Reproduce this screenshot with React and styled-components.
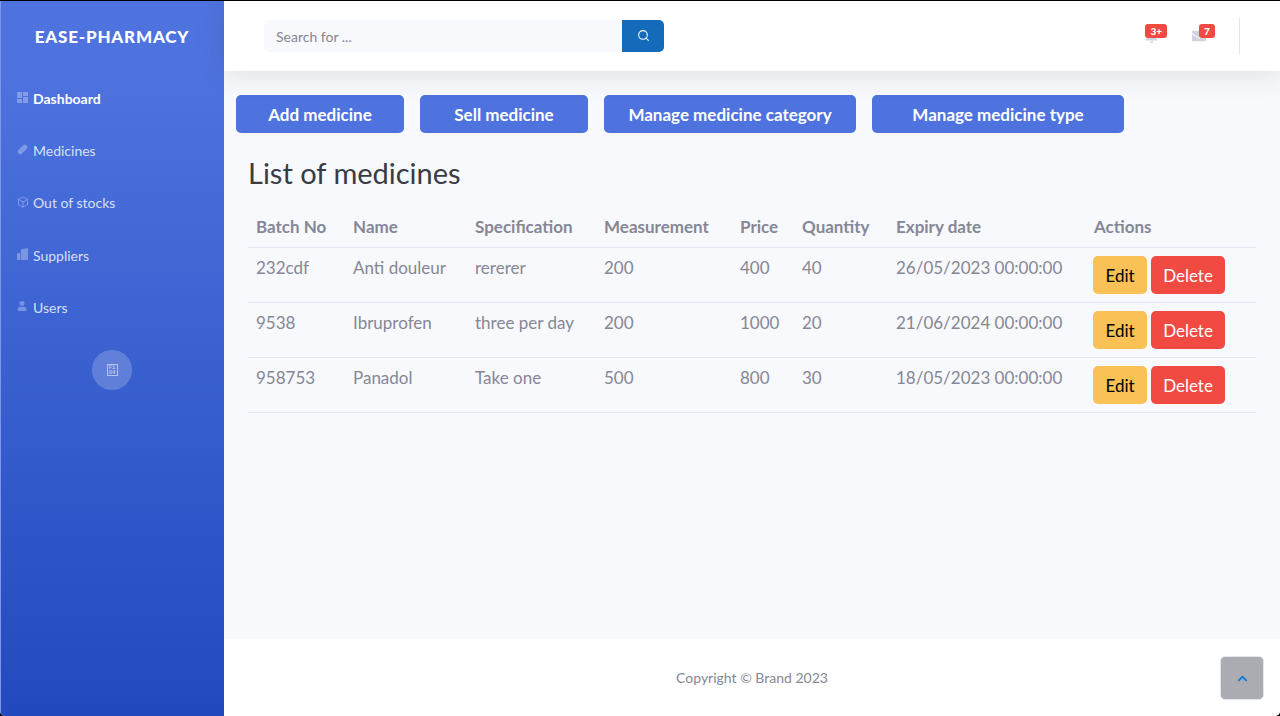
import styled, { createGlobalStyle } from 'styled-components';
import { FaUser, FaBell, FaEnvelope, FaChevronUp } from 'react-icons/fa';
import { FiBox, FiSearch } from 'react-icons/fi';

const GlobalStyle = createGlobalStyle`
  * { box-sizing: border-box; }
  html, body { margin: 0; height: 100%; background: #000; }
  body {
    font-family: Lato, "Noto Sans", sans-serif;
    color: #858796;
  }
`;

const medicines = [
  { batch: '232cdf', name: 'Anti douleur', spec: 'rererer', measure: '200', price: '400', qty: '40', expiry: '26/05/2023 00:00:00' },
  { batch: '9538', name: 'Ibruprofen', spec: 'three per day', measure: '200', price: '1000', qty: '20', expiry: '21/06/2024 00:00:00' },
  { batch: '958753', name: 'Panadol', spec: 'Take one', measure: '500', price: '800', qty: '30', expiry: '18/05/2023 00:00:00' },
];

function DashIcon() {
  return (
    <svg width="11" height="11" viewBox="0 0 11 11" fill="currentColor">
      <rect x="0" y="0" width="5" height="6" />
      <rect x="6" y="0" width="5" height="4" />
      <rect x="0" y="7" width="5" height="4" />
      <rect x="6" y="5" width="5" height="6" />
    </svg>
  );
}

function CapsuleIcon() {
  return (
    <svg width="11" height="11" viewBox="0 0 11 11" fill="currentColor">
      <rect x="-0.2" y="3" width="11.4" height="5" rx="2.5" transform="rotate(-45 5.5 5.5)" />
    </svg>
  );
}

function BuildingIcon() {
  return (
    <svg width="11" height="12" viewBox="0 0 11 12" fill="currentColor">
      <path d="M4 1.5 10 0a1 1 0 0 1 1 1v10a1 1 0 0 1-1 1H4z" />
      <path d="M0 6a1 1 0 0 1 1-1h2.4v7H1a1 1 0 0 1-1-1z" />
    </svg>
  );
}

export default function App() {
  return (
    <>
      <GlobalStyle />
      <Page>
        <Sidebar>
          <Brand>EASE-PHARMACY</Brand>
          <NavItem $active><NavIcon><DashIcon /></NavIcon><span>Dashboard</span></NavItem>
          <NavItem><NavIcon><CapsuleIcon /></NavIcon><span>Medicines</span></NavItem>
          <NavItem><NavIcon><FiBox size={12} /></NavIcon><span>Out of stocks</span></NavItem>
          <NavItem><NavIcon><BuildingIcon /></NavIcon><span>Suppliers</span></NavItem>
          <NavItem><NavIcon><FaUser size={10} /></NavIcon><span>Users</span></NavItem>
          <Toggle><Tofu>F1<br />04</Tofu></Toggle>
        </Sidebar>
        <Main>
          <Topbar>
            <SearchBox>
              <SearchInput placeholder="Search for ..." />
              <SearchButton><FiSearch size={13} /></SearchButton>
            </SearchBox>
            <Alerts>
              <Alert><FaBell size={13} /><Badge>3+</Badge></Alert>
              <Alert><FaEnvelope size={14} /><Badge>7</Badge></Alert>
              <Divider />
            </Alerts>
          </Topbar>
          <Content>
            <Actions>
              <PrimaryButton $w={168}>Add medicine</PrimaryButton>
              <PrimaryButton $w={168}>Sell medicine</PrimaryButton>
              <PrimaryButton $w={252}>Manage medicine category</PrimaryButton>
              <PrimaryButton $w={252}>Manage medicine type</PrimaryButton>
            </Actions>
            <Panel>
              <Title>List of medicines</Title>
              <Table>
                <thead>
                  <tr>
                    <Th $w={97}>Batch No</Th>
                    <Th $w={122}>Name</Th>
                    <Th $w={129}>Specification</Th>
                    <Th $w={136}>Measurement</Th>
                    <Th $w={62}>Price</Th>
                    <Th $w={94}>Quantity</Th>
                    <Th $w={198}>Expiry date</Th>
                    <Th>Actions</Th>
                  </tr>
                </thead>
                <tbody>
                  {medicines.map((m) => (
                    <tr key={m.batch}>
                      <Td>{m.batch}</Td>
                      <Td>{m.name}</Td>
                      <Td>{m.spec}</Td>
                      <Td>{m.measure}</Td>
                      <Td>{m.price}</Td>
                      <Td>{m.qty}</Td>
                      <Td>{m.expiry}</Td>
                      <ActionCell>
                        <EditButton>Edit</EditButton>
                        <DeleteButton>Delete</DeleteButton>
                      </ActionCell>
                    </tr>
                  ))}
                </tbody>
              </Table>
            </Panel>
          </Content>
          <Footer>
            <span>Copyright © Brand 2023</span>
            <ScrollTop><FaChevronUp size={11} /></ScrollTop>
          </Footer>
        </Main>
      </Page>
    </>
  );
}

const Page = styled.div`
  display: flex;
  height: 715px;
  margin-top: 1px;
  overflow: hidden;
  background: #f8f9fc;
  border-radius: 0 0 5px 5px;
`;

const Sidebar = styled.aside`
  width: 224px;
  flex-shrink: 0;
  background: linear-gradient(180deg, #4e73df 10%, #224abe 100%);
  box-shadow: inset 1px 0 0 #7d97e6;
  display: flex;
  flex-direction: column;
`;

const Brand = styled.div`
  height: 71px;
  display: flex;
  align-items: center;
  justify-content: center;
  color: #fff;
  font-size: 17px;
  font-weight: 900;
  letter-spacing: 0.8px;
`;

const NavItem = styled.div`
  height: 52.3px;
  display: flex;
  align-items: center;
  padding-left: 17px;
  font-size: 14px;
  font-weight: ${(p) => (p.$active ? 700 : 400)};
  color: ${(p) => (p.$active ? '#fff' : 'rgba(255,255,255,0.8)')};
`;

const NavIcon = styled.span`
  width: 16px;
  display: flex;
  align-items: center;
  margin-top: -2px;
  color: inherit;
  opacity: ${(p) => p.$dim ? 0.4 : 1};
  svg { color: currentColor; }
  ${NavItem}:not(:first-of-type) > & { color: rgba(255,255,255,0.3); }
`;

const Toggle = styled.div`
  width: 40px;
  height: 40px;
  border-radius: 50%;
  margin: 17px auto 0;
  background: rgba(255,255,255,0.2);
  display: flex;
  align-items: center;
  justify-content: center;
`;

const Tofu = styled.span`
  width: 11px;
  height: 12px;
  border: 1px solid rgba(255,255,255,0.55);
  color: rgba(255,255,255,0.7);
  font: 5.5px/5px "Liberation Mono", monospace;
  text-align: center;
`;

const Main = styled.div`
  flex: 1;
  min-width: 0;
  display: flex;
  flex-direction: column;
`;

const Topbar = styled.header`
  height: 70px;
  flex-shrink: 0;
  background: #fff;
  box-shadow: 0 2px 28px rgba(58,59,69,0.15);
  display: flex;
  align-items: center;
  justify-content: space-between;
  padding: 0 40px;
  position: relative;
`;

const SearchBox = styled.div`
  display: flex;
  width: 400px;
  height: 32px;
`;

const SearchInput = styled.input`
  flex: 1;
  min-width: 0;
  border: 0;
  outline: 0;
  background: #f8f9fc;
  border-radius: 5px 0 0 5px;
  padding: 0 12px;
  font: 14px Lato, sans-serif;
  &::placeholder { color: #858796; opacity: 1; }
`;

const SearchButton = styled.button`
  width: 42px;
  border: 0;
  background: #136bb9;
  color: #fff;
  border-radius: 0 5px 5px 0;
  display: flex;
  align-items: center;
  justify-content: center;
  padding: 0 0 2px;
`;

const Alerts = styled.div`
  display: flex;
  align-items: center;
`;

const Alert = styled.div`
  position: relative;
  width: 48px;
  height: 38px;
  display: flex;
  align-items: center;
  justify-content: center;
  color: #d1d3e2;
`;

const Badge = styled.span`
  position: absolute;
  top: 7px;
  right: 8px;
  min-width: 16px;
  height: 14px;
  padding: 0 5px;
  border-radius: 3px;
  background: #f04a43;
  color: #fff;
  font-size: 10px;
  font-weight: 900;
  line-height: 14px;
  text-align: center;
`;

const Divider = styled.div`
  width: 1px;
  height: 38px;
  background: #e3e6f0;
  margin-left: 16px;
`;

const Content = styled.main`
  flex: 1;
  padding: 24px 12px 0;
`;

const Actions = styled.div`
  display: flex;
  gap: 16px;
`;

const PrimaryButton = styled.button`
  width: ${(p) => p.$w}px;
  height: 38px;
  border: 0;
  border-radius: 5px;
  background: #4e73df;
  color: #fff;
  font: 700 17px Lato, sans-serif;
  padding: 0;
`;

const Panel = styled.section`
  padding: 0 12px;
`;

const Title = styled.h2`
  margin: 23px 0 17px;
  font-size: 29px;
  font-weight: 400;
  line-height: 34px;
  color: #3a3b45;
`;

const Table = styled.table`
  width: 100%;
  border-collapse: collapse;
  table-layout: fixed;
  font-size: 17px;
`;

const Th = styled.th`
  width: ${(p) => (p.$w ? `${p.$w}px` : 'auto')};
  padding: 8px;
  text-align: left;
  font-weight: 700;
  line-height: 24px;
  border-bottom: 1px solid #e3e6f0;
`;

const Td = styled.td`
  padding: 8px;
  line-height: 24px;
  vertical-align: top;
  border-bottom: 1px solid #e3e6f0;
  white-space: nowrap;
`;

const ActionCell = styled(Td)`
  padding: 8px 0 8px 7px;
`;

const EditButton = styled.button`
  height: 38px;
  width: 54px;
  border: 0;
  border-radius: 5px;
  background: #f9c156;
  color: #000;
  font: 400 17px Lato, sans-serif;
  padding: 0;
  margin-right: 4px;
`;

const DeleteButton = styled(EditButton)`
  width: 74px;
  margin-right: 0;
  background: #f04a43;
  color: #fff;
`;

const Footer = styled.footer`
  height: 77px;
  flex-shrink: 0;
  background: #fff;
  display: flex;
  align-items: center;
  justify-content: center;
  font-size: 14px;
  position: relative;
`;

const ScrollTop = styled.button`
  position: absolute;
  right: 16px;
  top: 17px;
  width: 44px;
  height: 44px;
  border: 1px solid #e3e6f0;
  border-radius: 5px;
  background: #abacb2;
  color: #0a7bd0;
  display: flex;
  align-items: center;
  justify-content: center;
  padding: 0;
`;
